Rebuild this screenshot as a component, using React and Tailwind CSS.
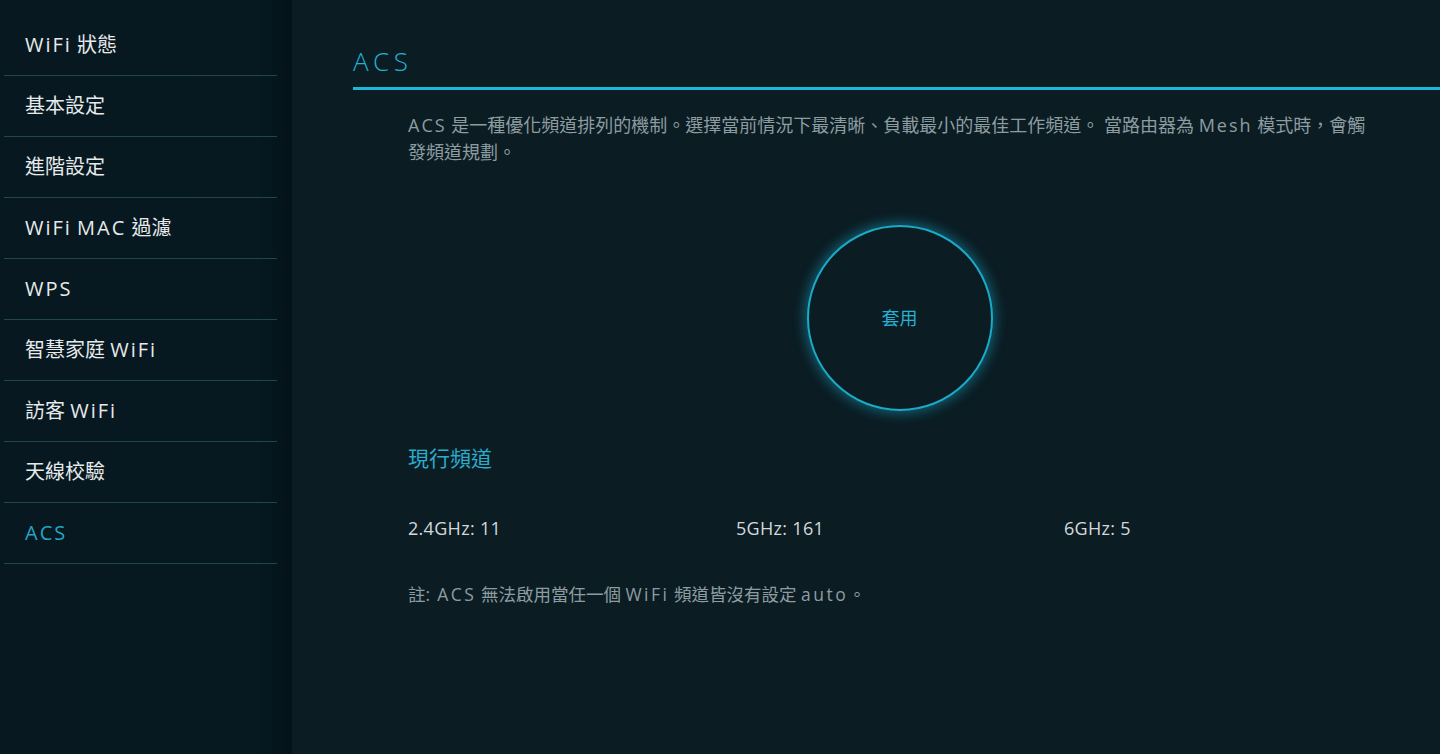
import React from "react";

const items = [
  "WiFi 狀態",
  "基本設定",
  "進階設定",
  "WiFi MAC 過濾",
  "WPS",
  "智慧家庭 WiFi",
  "訪客 WiFi",
  "天線校驗",
  "ACS",
];

function Mixed({ text, cls }) {
  const parts = text.split(/([A-Za-z0-9.:]+)/);
  return (
    <>
      {parts.map((p, i) =>
        /^[A-Za-z0-9.:]+$/.test(p) ? (
          <span key={i} className={cls}>
            {p}
          </span>
        ) : (
          <React.Fragment key={i}>{p}</React.Fragment>
        )
      )}
    </>
  );
}

export default function App() {
  const font = { fontFamily: '"Open Sans", "Noto Sans CJK TC", sans-serif' };
  return (
    <div className="flex w-[1440px] h-[754px] overflow-hidden bg-[#0b1c23]" style={font}>
      <aside className="w-[292px] shrink-0 h-full bg-[linear-gradient(90deg,#071820_0%,#061820_88%,#041319_100%)] pt-[15px]">
        <ul className="ml-[4px] w-[273px]">
          {items.map((t) => (
            <li
              key={t}
              className={`h-[61px] flex items-center pl-[21px] border-b border-[#1f4651] text-[20px] ${
                t === "ACS" ? "text-[#21a5c6]" : "text-[#e6eaeb]"
              }`}
            >
              <span className="whitespace-pre">
                <Mixed text={t} cls="tracking-[2px]" />
              </span>
            </li>
          ))}
        </ul>
      </aside>
      <main className="flex-1 h-full pl-[61px] pt-[44px]">
        <h1 className="text-[26px] leading-[34px] text-[#22b2d4] font-light tracking-[4.5px]">ACS</h1>
        <div className="mt-[9px] h-[3px] bg-[#19b9da]"></div>
        <div className="pl-[55px]">
          <p className="mt-[22px] w-[968px] text-[18px] leading-[27px] text-[#8d9ca1]">
            <Mixed
              text="ACS 是一種優化頻道排列的機制。選擇當前情況下最清晰、負載最小的最佳工作頻道。 當路由器為 Mesh 模式時，會觸發頻道規劃。"
              cls="tracking-[2px]"
            />
          </p>
          <div className="flex justify-center w-[983px] mt-[59px]">
            <button className="w-[186px] h-[186px] rounded-full border-2 border-[#1ba9c8] shadow-[0_0_12px_3px_rgba(27,169,200,0.45)] bg-[#0b1c23] text-[18px] text-[#26b0d2] flex items-center justify-center">
              套用
            </button>
          </div>
          <h2 className="mt-[32px] text-[21px] leading-[30px] text-[#29abcd]">現行頻道</h2>
          <div className="mt-[43px] flex text-[18px] text-[#d3d9db] leading-[24px] tracking-[0.3px]">
            <span className="w-[328px]">2.4GHz: 11</span>
            <span className="w-[328px]">5GHz: 161</span>
            <span>6GHz: 5</span>
          </div>
          <p className="mt-[42px] text-[17.5px] leading-[24px] text-[#8d9ca1]">
            <Mixed text="註: ACS 無法啟用當任一個 WiFi 頻道皆沒有設定 auto。" cls="tracking-[2.5px]" />
          </p>
        </div>
      </main>
    </div>
  );
}
